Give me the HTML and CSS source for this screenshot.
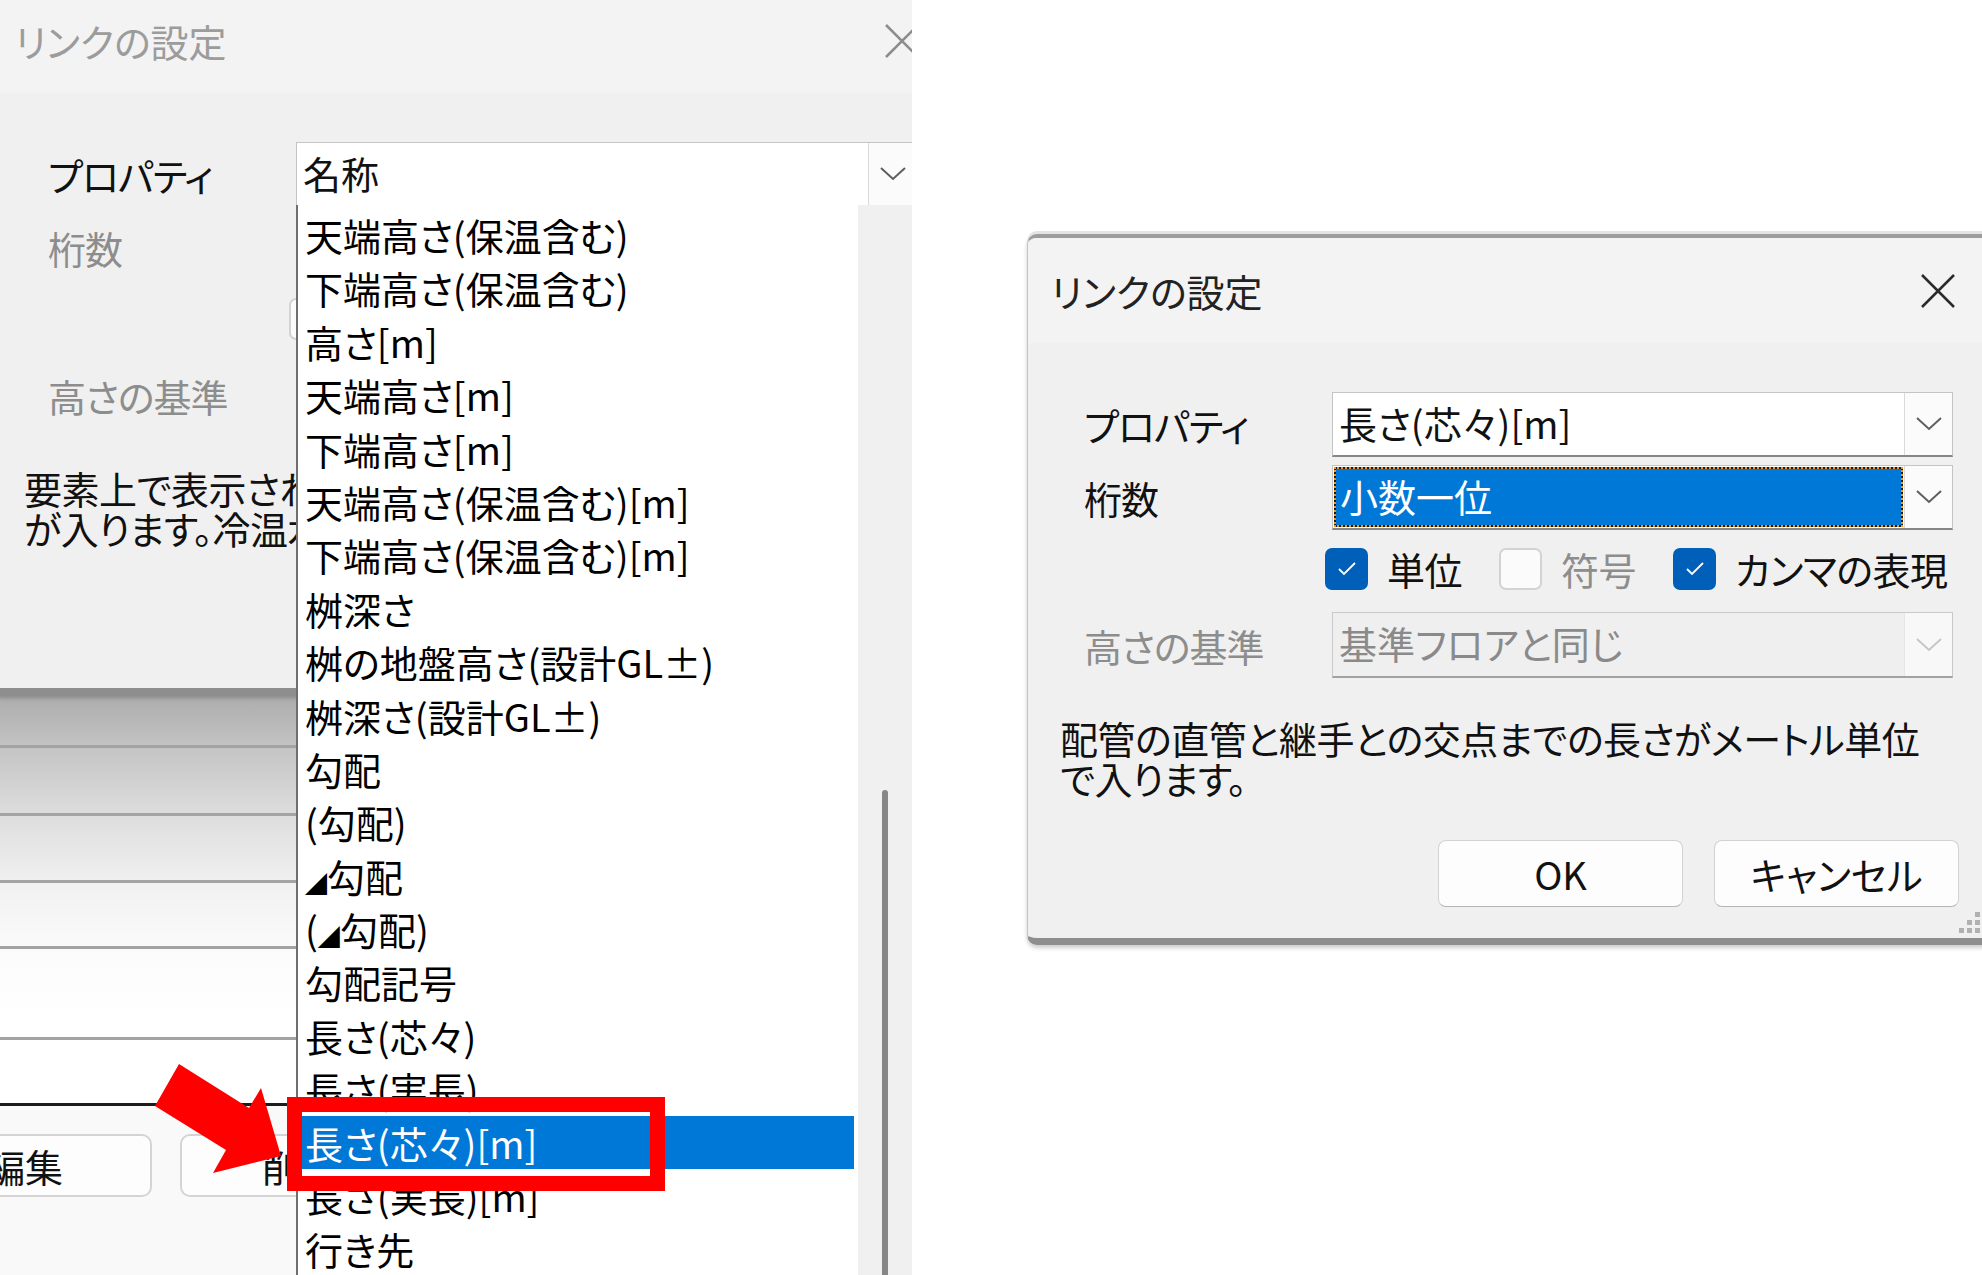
FILE: index.html
```html
<!DOCTYPE html>
<html lang="ja">
<head>
    <meta charset="UTF-8">
    <title>リンクの設定</title>
    <link rel="stylesheet" href="styles.css">
</head>
<body>
<div class="page">

    <!-- left capture: dialog with the property list opened -->
    <div class="shot-left">
        <div class="dlg inactive">
            <div class="dlg-title">
                <span>リンクの設定</span>
                <svg class="close" width="36" height="36" viewBox="0 0 36 36"><path d="M2 2L34 34M34 2L2 34"/></svg>
            </div>
            <div class="dlg-body">
                <div class="row">
                    <label>プロパティ</label>
                    <div class="combo">
                        <div class="val">名称</div>
                        <div class="drop"><svg width="26" height="14" viewBox="0 0 26 14"><polyline points="1,1 13,12 25,1"/></svg></div>
                    </div>
                </div>
                <div class="row">
                    <label class="dim">桁数</label>
                    <div class="combo off">
                        <div class="val"></div>
                        <div class="drop"><svg width="26" height="14" viewBox="0 0 26 14"><polyline points="1,1 13,12 25,1"/></svg></div>
                    </div>
                </div>
                <div class="row checks">
                    <label></label>
                    <div class="field">
                        <span class="cb off"></span><span class="ck-label dim">単位</span>
                        <span class="cb off"></span><span class="ck-label dim">符号</span>
                    </div>
                </div>
                <div class="row r3">
                    <label class="dim">高さの基準</label>
                    <div class="combo off">
                        <div class="val"></div>
                        <div class="drop"><svg width="26" height="14" viewBox="0 0 26 14"><polyline points="1,1 13,12 25,1"/></svg></div>
                    </div>
                </div>
                <p class="desc">要素上で表示される名称と種類<br>が入ります。冷温水管などの区分</p>
                <div class="btns">
                    <button class="btn">OK</button>
                    <button class="btn">キャンセル</button>
                </div>
            </div>
        </div>

        <div class="behind">
            <div class="bg-row r1"></div>
            <div class="bg-row r2"></div>
            <div class="bg-row r3"></div>
            <div class="bg-row r4"></div>
            <div class="bg-row r5"></div>
            <div class="bg-row r6"></div>
            <div class="bar">
                <button class="btn2 first">編集</button>
                <button class="btn2">削除</button>
            </div>
        </div>

        <div class="droplist">
            <div class="items">
                <div class="item">天端高さ(保温含む)</div>
                <div class="item">下端高さ(保温含む)</div>
                <div class="item">高さ[m]</div>
                <div class="item">天端高さ[m]</div>
                <div class="item">下端高さ[m]</div>
                <div class="item">天端高さ(保温含む)[m]</div>
                <div class="item">下端高さ(保温含む)[m]</div>
                <div class="item">桝深さ</div>
                <div class="item">桝の地盤高さ(設計GL±)</div>
                <div class="item">桝深さ(設計GL±)</div>
                <div class="item">勾配</div>
                <div class="item">(勾配)</div>
                <div class="item"><span class="tri">◢</span>勾配</div>
                <div class="item">(<span class="tri">◢</span>勾配)</div>
                <div class="item">勾配記号</div>
                <div class="item">長さ(芯々)</div>
                <div class="item">長さ(実長)</div>
                <div class="item sel">長さ(芯々)[m]</div>
                <div class="item">長さ(実長)[m]</div>
                <div class="item">行き先</div>
            </div>
            <div class="track"><div class="thumb"></div></div>
        </div>

        <div class="mark"></div>
        <svg class="arrow" width="912" height="1275" viewBox="0 0 912 1275">
            <polygon points="179,1064 249,1108 261,1088 281,1156 213,1173 226,1150 155,1106"/>
        </svg>
    </div>

    <!-- right capture: dialog after selection -->
    <div class="shot-right">
        <div class="dlg">
            <div class="dlg-title">
                <span>リンクの設定</span>
                <svg class="close" width="36" height="36" viewBox="0 0 36 36"><path d="M2 2L34 34M34 2L2 34"/></svg>
            </div>
            <div class="dlg-body">
                <div class="row">
                    <label>プロパティ</label>
                    <div class="combo">
                        <div class="val">長さ(芯々)[m]</div>
                        <div class="drop"><svg width="26" height="14" viewBox="0 0 26 14"><polyline points="1,1 13,12 25,1"/></svg></div>
                    </div>
                </div>
                <div class="row">
                    <label>桁数</label>
                    <div class="combo focus">
                        <div class="val">小数一位</div>
                        <div class="drop"><svg width="26" height="14" viewBox="0 0 26 14"><polyline points="1,1 13,12 25,1"/></svg></div>
                    </div>
                </div>
                <div class="row checks">
                    <label></label>
                    <div class="field">
                        <span class="cb on"><svg width="20" height="16" viewBox="0 0 20 16"><polyline points="2,8 7,13 18,2"/></svg></span><span class="ck-label">単位</span>
                        <span class="cb off"></span><span class="ck-label dim">符号</span>
                        <span class="cb on"><svg width="20" height="16" viewBox="0 0 20 16"><polyline points="2,8 7,13 18,2"/></svg></span><span class="ck-label">カンマの表現</span>
                    </div>
                </div>
                <div class="row r3">
                    <label class="dim">高さの基準</label>
                    <div class="combo off">
                        <div class="val">基準フロアと同じ</div>
                        <div class="drop"><svg width="26" height="14" viewBox="0 0 26 14"><polyline points="1,1 13,12 25,1"/></svg></div>
                    </div>
                </div>
                <p class="desc">配管の直管と継手との交点までの長さがメートル単位<br>で入ります。</p>
                <div class="btns">
                    <button class="btn">OK</button>
                    <button class="btn">キャンセル</button>
                </div>
            </div>
            <svg class="grip" width="28" height="28" viewBox="0 0 28 28">
                <rect x="20" y="4" width="5" height="5"/>
                <rect x="12" y="12" width="5" height="5"/><rect x="20" y="12" width="5" height="5"/>
                <rect x="4" y="20" width="5" height="5"/><rect x="12" y="20" width="5" height="5"/><rect x="20" y="20" width="5" height="5"/>
            </svg>
        </div>
    </div>

</div>
</body>
</html>
```

FILE: styles.css
```css
* {
    box-sizing: border-box;
}
html, body {
    margin: 0;
}
body {
    width: 1982px;
    height: 1275px;
    overflow: hidden;
    background: #fff;
    font-family: "Noto Sans CJK JP", sans-serif;
    font-size: 38px;
    font-feature-settings: "palt" 1;
    color: #111;
}
.page {
    display: flex;
    height: 100%;
}

/* dialog */
.dlg {
    position: relative;
    width: 958px;
    background: #f0f0f0;
    border-top: 4px solid #9d9d9d;
    border-left: 1px solid #c4c4c4;
    border-bottom: 7px solid #8e8e8e;
    border-radius: 10px 0 0 10px;
    box-shadow: 0 -3px 0 #e4e4e4, 0 3px 4px rgba(0, 0, 0, 0.2);
}
.dlg-title {
    height: 105px;
    background: #f3f3f3;
    display: flex;
    align-items: center;
    justify-content: space-between;
    padding: 0 29px 0 23px;
    border-radius: 8px 0 0 0;
    color: #222;
}
.close path {
    stroke: #2b2b2b;
    stroke-width: 2.5;
}
.dlg-body {
    padding: 49px 26px 31px 56px;
}
.row {
    display: flex;
    align-items: center;
    height: 65px;
}
.row + .row {
    margin-top: 8px;
}
.row.checks {
    height: 42px;
    margin-top: 18px;
}
.row.r3 {
    height: 66px;
    margin-top: 22px;
}
.row label {
    width: 248px;
    flex: none;
    letter-spacing: -1px;
}
.dim {
    color: #8d8d8d;
}

.combo {
    width: 621px;
    height: 100%;
    display: flex;
    background: #fff;
    border: 1px solid #c4c4c4;
    border-bottom: 2px solid #868686;
}
.combo .val {
    flex: 1;
    padding-left: 6px;
    line-height: 60px;
    white-space: nowrap;
    overflow: hidden;
}
.combo .drop {
    width: 48px;
    flex: none;
    border-left: 1px solid #dadada;
    background: #fbfbfb;
    display: flex;
    align-items: center;
    justify-content: center;
}
.combo .drop polyline {
    fill: none;
    stroke: #5e5e5e;
    stroke-width: 2;
}
.combo.focus .val {
    margin: 1px;
    padding-left: 4px;
    line-height: 54px;
    color: #fff;
    border: 2px dotted #f7941d;
    background: linear-gradient(#0078d7, #0078d7) padding-box, #1a1a1a;
}
.combo.off {
    background: #efefef;
    border-color: #c9c9c9;
    border-bottom-color: #a2a2a2;
    color: #8a8a8a;
}
.combo.off .drop {
    background: #f8f8f8;
    border-left-color: #e6e6e6;
}
.combo.off .drop polyline {
    stroke: #c6c6c6;
}

.checks .field {
    display: flex;
    align-items: center;
    margin-left: -7px;
    line-height: 42px;
    white-space: nowrap;
}
.cb {
    width: 43px;
    height: 42px;
    flex: none;
    border-radius: 7px;
    display: flex;
    align-items: center;
    justify-content: center;
    margin-right: 19px;
}
.cb.on {
    background: #005fb8;
}
.cb.on polyline {
    fill: none;
    stroke: #fff;
    stroke-width: 1.8;
}
.cb.off {
    background: #fbfbfb;
    border: 2px solid #d3d3d3;
}
.ck-label {
    margin-right: 37px;
    letter-spacing: -0.5px;
}

.desc {
    margin: 40px 0 0 -24px;
    line-height: 40px;
    letter-spacing: -0.5px;
    white-space: nowrap;
}
.btns {
    display: flex;
    justify-content: flex-end;
    gap: 31px;
    margin-top: 42px;
}
.btn {
    width: 245px;
    height: 67px;
    font: inherit;
    color: #111;
    background: #fdfdfd;
    border: 1px solid #d2d2d2;
    border-bottom-color: #b5b5b5;
    border-radius: 8px;
}
.grip {
    position: absolute;
    right: 2px;
    bottom: 2px;
}
.grip rect {
    fill: #b0b0b0;
}

/* left capture */
.shot-left {
    position: relative;
    width: 912px;
    height: 1275px;
    flex: none;
    overflow: hidden;
}
.dlg.inactive {
    margin: -16px 0 0 -9px;
}
.inactive .dlg-title {
    color: #9c9c9c;
}
.inactive .close path {
    stroke: #8c8c8c;
}
.behind {
    background: linear-gradient(#acacac, #c5c5c5 55px, #dedede 122px, #f1f1f1 190px, #fbfbfb 255px, #fff 325px);
}
.bg-row {
    border-bottom: 3px solid #a3a3a3;
}
.bg-row.r1 { height: 53px; }
.bg-row.r2 { height: 68px; }
.bg-row.r3 { height: 67px; }
.bg-row.r4 { height: 66px; }
.bg-row.r5 { height: 91px; }
.bg-row.r6 {
    height: 66px;
    border-bottom-color: #1c1c1c;
}
.bar {
    display: flex;
    gap: 28px;
    padding-top: 28px;
    height: 200px;
    background: #f9f9f9;
}
.btn2 {
    width: 240px;
    height: 63px;
    flex: none;
    font: inherit;
    color: #111;
    background: #fdfdfd;
    border: 2px solid #d4d4d4;
    border-radius: 10px;
}
.btn2.first {
    width: 254px;
    margin-left: -102px;
}

.droplist {
    position: absolute;
    left: 296px;
    top: 205px;
    bottom: 0;
    width: 640px;
    display: flex;
    background: #fff;
    border-left: 2px solid #6f6f6f;
}
.items {
    width: 560px;
    flex: none;
    padding-top: 3px;
}
.item {
    width: 556px;
    height: 53.4px;
    line-height: 53.4px;
    padding-left: 7px;
    white-space: nowrap;
    color: #000;
}
.item.sel {
    background: #0078d7;
    color: #fff;
}
.tri {
    font-size: 22px;
}
.track {
    position: relative;
    width: 54px;
    flex: none;
    background: #f0f0f0;
}
.thumb {
    position: absolute;
    left: 24px;
    width: 6px;
    top: 585px;
    bottom: 0;
    background: #878787;
    border-radius: 3px 3px 0 0;
}
.mark {
    position: absolute;
    left: 287px;
    top: 1097px;
    width: 378px;
    height: 94px;
    border: 15px solid #ff0000;
}
.arrow {
    position: absolute;
    left: 0;
    top: 0;
}
.arrow polygon {
    fill: #ff0000;
}

/* right capture */
.shot-right {
    flex: none;
    margin-left: 115px;
    padding-top: 234px;
}
```
